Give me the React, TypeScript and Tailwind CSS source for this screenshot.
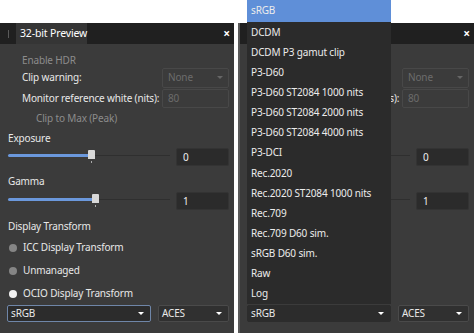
import React from 'react';

const font = { fontFamily: '"Noto Sans", "Open Sans", sans-serif', letterSpacing: '-0.15px' };

const items = [
  'sRGB',
  'DCDM',
  'DCDM P3 gamut clip',
  'P3-D60',
  'P3-D60 ST2084 1000 nits',
  'P3-D60 ST2084 2000 nits',
  'P3-D60 ST2084 4000 nits',
  'P3-DCI',
  'Rec.2020',
  'Rec.2020 ST2084 1000 nits',
  'Rec.709',
  'Rec.709 D60 sim.',
  'sRGB D60 sim.',
  'Raw',
  'Log',
];

const Arrow: React.FC<{ dim?: boolean }> = ({ dim }) => (
  <span
    className={`block w-0 h-0 border-l-[3px] border-r-[3px] border-t-[3px] border-l-transparent border-r-transparent ${
      dim ? 'border-t-[#666]' : 'border-t-white'
    }`}
  />
);

const Slider: React.FC<{ pos: number; value: string }> = ({ pos, value }) => (
  <div className="flex items-center h-[18px] pl-[8px] pr-[5px] shrink-0">
    <div className="relative w-[162px] h-[18px]">
      <div className="absolute left-0 right-0 top-[7px] h-px bg-[#2f2f2f]" />
      <div className="absolute left-0 top-[6px] h-[3px] rounded-full bg-[#6b98dc]" style={{ width: pos }} />
      <div className="absolute top-[2px] w-[7px] h-[9px] bg-[#d8d8d8] rounded-t-[1px]" style={{ left: pos - 3 }} />
      <div className="absolute top-[13px] w-px h-[2px] bg-[#aaa]" style={{ left: pos }} />
    </div>
    <div className="ml-auto w-[53px] h-[18px] bg-[#2b2b2b] border border-[#333] rounded-[2px] flex items-center pl-[6px] text-[#eee]">
      {value}
    </div>
  </div>
);

const Radio: React.FC<{ label: string; on?: boolean }> = ({ label, on }) => (
  <div className="flex items-center h-[23px] pl-[9px] gap-[6px] shrink-0">
    <span className={`w-[8px] h-[8px] rounded-full ${on ? 'bg-[#f2f2f2]' : 'bg-[#858585]'}`} />
    {label}
  </div>
);

const Panel: React.FC<{ open?: boolean }> = ({ open }) => (
  <div className="h-full flex flex-col bg-[#3b3b3b] overflow-hidden text-[10px] whitespace-nowrap" style={font}>
    <div className="h-[21px] bg-[#202020] flex items-stretch shrink-0">
      <div className="w-[16px] flex items-center justify-center">
        <span className="w-px h-[8px] bg-[#5a5a5a]" />
      </div>
      <div className="w-[71px] bg-[#353535] pl-[4px] flex items-center text-[10.5px] text-white">32-bit Preview</div>
      <div className="ml-auto pr-[4px] flex items-center text-[12px] font-bold text-white leading-none">×</div>
    </div>
    <div className="flex flex-col text-[#e8e8e8]">
      <div className="h-[10px] shrink-0" />
      <div className="pl-[22px] h-[13px] flex items-center text-[#8c8c8c]">Enable HDR</div>
      <div className="flex items-center h-[21px] pl-[22px] pr-[5px]">
        <span>Clip warning:</span>
        <div className="ml-auto w-[67px] h-[20px] border border-[#484848] rounded-[2px] flex items-center justify-between px-[5px] text-[#6c6c6c]">
          None
          <Arrow dim />
        </div>
      </div>
      <div className="flex items-center h-[21px] pl-[22px] pr-[5px]">
        <span>Monitor reference white (nits):</span>
        <div className="ml-auto w-[67px] h-[19px] border border-[#484848] rounded-[2px] flex items-center px-[5px] text-[#6c6c6c]">
          80
        </div>
      </div>
      <div className="pl-[36px] h-[19px] flex items-center text-[#8c8c8c]">Clip to Max (Peak)</div>
      <div className="pl-[8px] h-[20px] flex items-center">Exposure</div>
      <Slider pos={83} value="0" />
      <div className="pl-[8px] h-[26px] pt-[4px] flex items-center">Gamma</div>
      <Slider pos={87} value="1" />
      <div className="pl-[8px] h-[26px] pt-[6px] flex items-center">Display Transform</div>
      <Radio label="ICC Display Transform" />
      <Radio label="Unmanaged" />
      <Radio label="OCIO Display Transform" on />
      <div className="flex items-center gap-[7px] pl-[7px] pr-[5px] h-[17px] shrink-0">
        <div
          className={`w-[144px] h-[17px] rounded-[2px] flex items-center justify-between px-[3px] pr-[6px] bg-[#2c2c2c] border ${
            open ? 'border-[#2c2c2c]' : 'border-[#6f86a8]'
          }`}
        >
          sRGB
          <Arrow />
        </div>
        <div className="flex-1 h-[17px] rounded-[2px] border border-[#4a4a4a] bg-[#303030] flex items-center justify-between px-[3px] pr-[6px]">
          ACES
          <Arrow />
        </div>
      </div>
    </div>
  </div>
);

const App: React.FC = () => {
  return (
    <div className="relative w-[474px] h-[333px] bg-white overflow-hidden">
      <div className="absolute inset-x-0 top-[23px] bottom-0 flex">
        <div className="w-[234px] h-full">
          <Panel />
        </div>
        <div className="w-[4px] bg-white" />
        <div className="flex-1 h-full border-l-2 border-[#5a5a5a]">
          <Panel open />
        </div>
      </div>
      {/* open dropdown list */}
      <div
        className="absolute left-[247px] top-0 w-[144px] h-[304px] bg-[#2b2b2b] flex flex-col text-[10px] text-[#ececec]"
        style={font}
      >
        {items.map((t, i) => (
          <div
            key={t}
            className={`flex items-center pl-[4px] whitespace-nowrap ${i === 0 ? 'bg-[#5f8fd8] h-[22px]' : 'h-[20.2px]'}`}
          >
            {t}
          </div>
        ))}
      </div>
    </div>
  );
};

export default App;
